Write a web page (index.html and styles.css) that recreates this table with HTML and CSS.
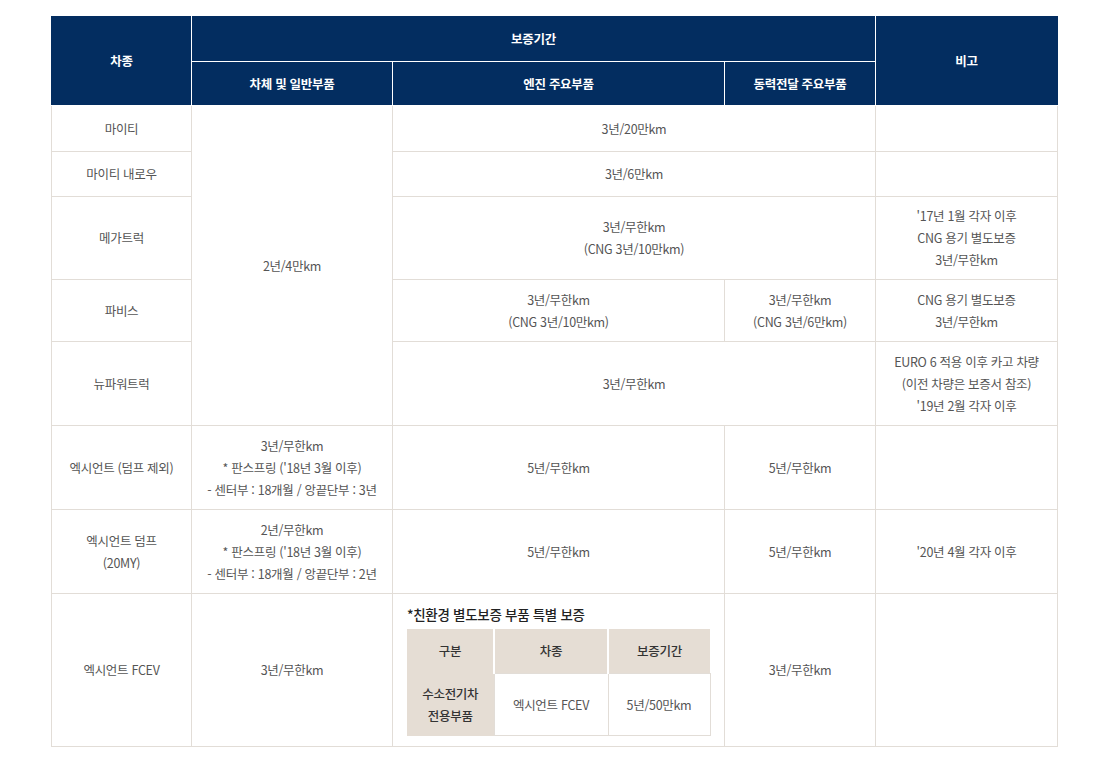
FILE: index.html
```html
<!DOCTYPE html>
<html lang="ko">
<head>
<meta charset="utf-8">
<title>보증기간</title>
<link rel="stylesheet" href="styles.css">
</head>
<body>
<div class="wrap">
<table class="warranty">
  <colgroup>
    <col class="c1"><col class="c2"><col class="c3"><col class="c4"><col class="c5">
  </colgroup>
  <thead>
    <tr class="h1">
      <th rowspan="2">차종</th>
      <th colspan="3">보증기간</th>
      <th rowspan="2">비고</th>
    </tr>
    <tr class="h2">
      <th>차체 및 일반부품</th>
      <th>엔진 주요부품</th>
      <th>동력전달 주요부품</th>
    </tr>
  </thead>
  <tbody>
    <tr class="r46">
      <td>마이티</td>
      <td rowspan="5">2년/4만km</td>
      <td colspan="2">3년/20만km</td>
      <td></td>
    </tr>
    <tr class="r45">
      <td>마이티 내로우</td>
      <td colspan="2">3년/6만km</td>
      <td></td>
    </tr>
    <tr class="r83">
      <td>메가트럭</td>
      <td colspan="2">3년/무한km<br>(CNG 3년/10만km)</td>
      <td>'17년 1월 각자 이후<br>CNG 용기 별도보증<br>3년/무한km</td>
    </tr>
    <tr class="r62">
      <td>파비스</td>
      <td>3년/무한km<br>(CNG 3년/10만km)</td>
      <td>3년/무한km<br>(CNG 3년/6만km)</td>
      <td>CNG 용기 별도보증<br>3년/무한km</td>
    </tr>
    <tr class="r84">
      <td>뉴파워트럭</td>
      <td colspan="2">3년/무한km</td>
      <td>EURO 6 적용 이후 카고 차량<br>(이전 차량은 보증서 참조)<br>'19년 2월 각자 이후</td>
    </tr>
    <tr class="r84">
      <td>엑시언트 (덤프 제외)</td>
      <td>3년/무한km<br>* 판스프링 ('18년 3월 이후)<br>- 센터부 : 18개월 / 앙끝단부 : 3년</td>
      <td>5년/무한km</td>
      <td>5년/무한km</td>
      <td></td>
    </tr>
    <tr class="r84">
      <td>엑시언트 덤프<br>(20MY)</td>
      <td>2년/무한km<br>* 판스프링 ('18년 3월 이후)<br>- 센터부 : 18개월 / 앙끝단부 : 2년</td>
      <td>5년/무한km</td>
      <td>5년/무한km</td>
      <td>'20년 4월 각자 이후</td>
    </tr>
    <tr class="r153">
      <td>엑시언트 FCEV</td>
      <td>3년/무한km</td>
      <td class="nest-cell">
        <p class="nest-title">*친환경 별도보증 부품 특별 보증</p>
        <table class="nest">
          <colgroup><col class="n1"><col class="n2"><col class="n3"></colgroup>
          <tr class="nh">
            <th>구분</th>
            <th>차종</th>
            <th>보증기간</th>
          </tr>
          <tr class="nb">
            <th>수소전기차<br>전용부품</th>
            <td>엑시언트 FCEV</td>
            <td>5년/50만km</td>
          </tr>
        </table>
      </td>
      <td>3년/무한km</td>
      <td></td>
    </tr>
  </tbody>
</table>
</div>
</body>
</html>
```
FILE: styles.css
```css
html, body {
  margin: 0;
  padding: 0;
  background: #fff;
}
body {
  font-family: "Noto Sans CJK KR", "Noto Sans", sans-serif;
}
.wrap {
  padding: 16px 0 0 51px;
}
.warranty {
  width: 1006px;
  border-collapse: collapse;
  table-layout: fixed;
  font-size: 12.5px;
  line-height: 22px;
  color: #555;
  letter-spacing: -0.3px;
}
.c1 { width: 140px; }
.c2 { width: 201px; }
.c3 { width: 332px; }
.c4 { width: 151px; }
.c5 { width: 182px; }

.warranty thead th {
  background: #032d60;
  color: #fff;
  font-weight: 700;
  border: 1px solid #fff;
  padding: 0;
  text-align: center;
  vertical-align: middle;
}
.warranty thead tr:first-child th:first-child { border-left-color: #032d60; border-top-color: #032d60; }
.warranty thead tr:first-child th { border-top-color: #032d60; }
.warranty thead tr:first-child th:last-child { border-right-color: #032d60; }
.warranty .h1 th { height: 44px; }
.warranty .h2 th { height: 43px; }

.warranty tbody td {
  border: 1px solid #e2ddd7;
  padding: 0;
  text-align: center;
  vertical-align: middle;
}
.r46 td { height: 45px; }
.r45 td { height: 44px; }
.r83 td { height: 82px; }
.r62 td { height: 61px; }
.r84 td { height: 83px; }
.r153 td { height: 152px; }

.warranty tbody td.nest-cell {
  padding: 8px 14px 9px 14px;
  height: 135px;
  vertical-align: top;
  text-align: left;
}
.nest-title {
  margin: 0 0 3px 0;
  font-size: 13.5px;
  font-weight: 500;
  color: #222;
  line-height: 24px;
}
.nest {
  width: 303px;
  border-collapse: collapse;
  table-layout: fixed;
  font-size: 12.5px;
  line-height: 22px;
}
.n1 { width: 87px; }
.n2 { width: 114px; }
.n3 { width: 102px; }
.nest th, .nest td {
  padding: 0;
  text-align: center;
  vertical-align: middle;
}
.nest th {
  background: #e5ddd4;
  color: #333;
  font-weight: 500;
}
.nest .nh th {
  height: 44px;
  border-left: 2px solid #fff;
}
.nest .nh th:first-child { border-left: 0; }
.nest .nb th, .nest .nb td {
  height: 61px;
}
.warranty .nest .nb td {
  background: #fff;
  color: #555;
  border: 1px solid #e2ddd7;
  height: 61px;
}
```
